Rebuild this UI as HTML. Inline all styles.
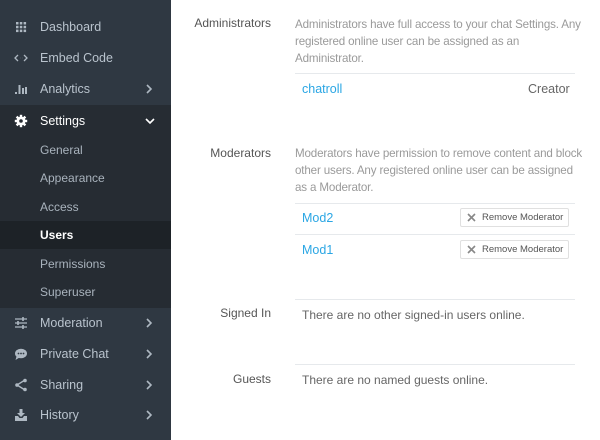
<!DOCTYPE html>
<html><head><meta charset="utf-8"><style>
*{margin:0;padding:0;box-sizing:border-box}
body{width:600px;height:440px;overflow:hidden;background:#fff;font-family:"Liberation Sans",sans-serif;position:relative}
.sb{position:absolute;left:0;top:0;width:171px;height:440px;background:#2f3842}
.set{position:absolute;left:0;top:105px;width:171px;height:203px;background:#262c33}
.sel{position:absolute;left:0;top:221px;width:171px;height:28px;background:#1d2227}
.it{position:absolute;left:40px;font-size:12.5px;color:#b9c3cd;line-height:16px}
.sub{position:absolute;left:40px;font-size:12px;color:#a9b3bd;line-height:16px}
.ic{position:absolute;left:14px;width:14px;height:14px}
.ch{position:absolute;left:145px;width:8px;height:10px}
.t{position:absolute;font-size:12px;line-height:17px}
.lab{color:#555;text-align:right;right:329px}
.desc{color:#9a9a9a;left:295px;width:290px;font-size:11.6px;letter-spacing:-0.15px}
.lnk{color:#2aa6e4;left:302px}
.hr{position:absolute;left:295px;width:280px;height:1px;background:#e6e9ec}
.btn{position:absolute;left:460px;width:109px;height:19px;border:1px solid #e0e0e0;border-radius:2px;font-size:9.5px;color:#555;line-height:17px;padding-left:21px;white-space:nowrap}
.btn svg{position:absolute;left:6px;top:4px}
</style></head><body>
<div class="sb"></div><div class="set"></div><div class="sel"></div>
<svg class="ic" style="top:20px" viewBox="0 0 14 14" fill="#aeb8c2"><rect x="2" y="2" width="2.5" height="2.5"/><rect x="5.8" y="2" width="2.5" height="2.5"/><rect x="9.6" y="2" width="2.5" height="2.5"/><rect x="2" y="5.8" width="2.5" height="2.5"/><rect x="5.8" y="5.8" width="2.5" height="2.5"/><rect x="9.6" y="5.8" width="2.5" height="2.5"/><rect x="2" y="9.6" width="2.5" height="2.5"/><rect x="5.8" y="9.6" width="2.5" height="2.5"/><rect x="9.6" y="9.6" width="2.5" height="2.5"/></svg>
<div class="it" style="top:19px">Dashboard</div>
<svg class="ic" style="top:51px" viewBox="0 0 14 14" fill="none" stroke="#aeb8c2" stroke-width="1.3"><path d="M4 4L1 7l3 3M10 4l3 3-3 3"/><path d="M6 7h.1M8 7h.1" stroke-width="1.8"/></svg>
<div class="it" style="top:50px">Embed Code</div>
<svg class="ic" style="top:82px" viewBox="0 0 14 14" fill="#aeb8c2"><rect x="1" y="10" width="2" height="2"/><rect x="4.5" y="3" width="2" height="9"/><rect x="8" y="6" width="2" height="6"/><rect x="11" y="5" width="2" height="7"/></svg>
<div class="it" style="top:81px">Analytics</div>
<svg class="ch" style="top:84px" viewBox="0 0 8 10" fill="none" stroke="#aeb8c2" stroke-width="1.6"><path d="M2 1l4 4-4 4"/></svg>
<svg class="ic" style="top:114px" viewBox="0 0 14 14"><g fill="#fff"><circle cx="7" cy="7" r="4.5"/><rect x="5.8" y="0.8" width="2.4" height="12.4"/><rect x="0.8" y="5.8" width="12.4" height="2.4"/><rect x="5.8" y="0.8" width="2.4" height="12.4" transform="rotate(45 7 7)"/><rect x="5.8" y="0.8" width="2.4" height="12.4" transform="rotate(-45 7 7)"/></g><circle cx="7" cy="7" r="1.8" fill="#262c33"/></svg>
<div class="it" style="top:113px;color:#fff">Settings</div>
<svg class="ch" style="top:116px;width:10px" viewBox="0 0 10 10" fill="none" stroke="#fff" stroke-width="1.6"><path d="M1 3l4 4 4-4"/></svg>
<div class="sub" style="top:142px">General</div>
<div class="sub" style="top:170px">Appearance</div>
<div class="sub" style="top:199px">Access</div>
<div class="sub" style="top:227px;color:#fff;font-weight:bold">Users</div>
<div class="sub" style="top:256px">Permissions</div>
<div class="sub" style="top:284px">Superuser</div>
<svg class="ic" style="top:316px" viewBox="0 0 14 14" stroke="#aeb8c2" stroke-width="1.2" fill="none"><path d="M1 3h12M1 7h12M1 11h12"/><path d="M9 1v4M4 5v4M9 9v4" stroke-width="1.6"/></svg>
<div class="it" style="top:315px">Moderation</div>
<svg class="ch" style="top:318px" viewBox="0 0 8 10" fill="none" stroke="#aeb8c2" stroke-width="1.6"><path d="M2 1l4 4-4 4"/></svg>
<svg class="ic" style="top:347px" viewBox="0 0 14 14"><ellipse cx="7" cy="6.5" rx="6" ry="4.8" fill="#aeb8c2"/><path d="M2.5 9.5L1.5 13l4-2.5z" fill="#aeb8c2"/><circle cx="4.5" cy="6.5" r=".9" fill="#2f3842"/><circle cx="7" cy="6.5" r=".9" fill="#2f3842"/><circle cx="9.5" cy="6.5" r=".9" fill="#2f3842"/></svg>
<div class="it" style="top:346px">Private Chat</div>
<svg class="ch" style="top:349px" viewBox="0 0 8 10" fill="none" stroke="#aeb8c2" stroke-width="1.6"><path d="M2 1l4 4-4 4"/></svg>
<svg class="ic" style="top:378px" viewBox="0 0 14 14"><path d="M11 2L3 7l8 5" fill="none" stroke="#aeb8c2" stroke-width="1.4"/><circle cx="11" cy="2.5" r="1.8" fill="#aeb8c2"/><circle cx="3" cy="7" r="1.8" fill="#aeb8c2"/><circle cx="11" cy="11.5" r="1.8" fill="#aeb8c2"/></svg>
<div class="it" style="top:377px">Sharing</div>
<svg class="ch" style="top:380px" viewBox="0 0 8 10" fill="none" stroke="#aeb8c2" stroke-width="1.6"><path d="M2 1l4 4-4 4"/></svg>
<svg class="ic" style="top:408px" viewBox="0 0 14 14" fill="#aeb8c2"><path d="M5.5 1h3v4h2.5L7 9 3 5h2.5z"/><path d="M1 8h3l1.5 2h3L10 8h3v5H1z"/></svg>
<div class="it" style="top:407px">History</div>
<svg class="ch" style="top:410px" viewBox="0 0 8 10" fill="none" stroke="#aeb8c2" stroke-width="1.6"><path d="M2 1l4 4-4 4"/></svg>

<div class="t lab" style="top:15px">Administrators</div>
<div class="t desc" style="top:16px">Administrators have full access to your chat Settings. Any registered online user can be assigned as an Administrator.</div>
<div class="hr" style="top:73px"></div>
<div class="t lnk" style="top:81px;font-size:12.5px">chatroll</div>
<div class="t" style="top:81px;left:528px;color:#666;font-size:12.5px">Creator</div>

<div class="t lab" style="top:145px">Moderators</div>
<div class="t desc" style="top:145px">Moderators have permission to remove content and block other users. Any registered online user can be assigned as a Moderator.</div>
<div class="hr" style="top:203px"></div>
<div class="t lnk" style="top:210px;font-size:12.5px">Mod2</div>
<div class="btn" style="top:208px"><svg width="9" height="9" viewBox="0 0 9 9" stroke="#888" stroke-width="1.6"><path d="M1 1l7 7M8 1L1 8"/></svg>Remove Moderator</div>
<div class="hr" style="top:234px"></div>
<div class="t lnk" style="top:242px;font-size:12.5px">Mod1</div>
<div class="btn" style="top:240px"><svg width="9" height="9" viewBox="0 0 9 9" stroke="#888" stroke-width="1.6"><path d="M1 1l7 7M8 1L1 8"/></svg>Remove Moderator</div>

<div class="hr" style="top:299px"></div>
<div class="t lab" style="top:305px">Signed In</div>
<div class="t" style="top:307px;left:302px;color:#666">There are no other signed-in users online.</div>
<div class="hr" style="top:364px"></div>
<div class="t lab" style="top:371px">Guests</div>
<div class="t" style="top:372px;left:302px;color:#666">There are no named guests online.</div>
</body></html>
